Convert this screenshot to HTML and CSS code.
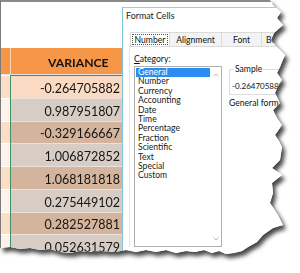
FILE: index.html
```html
<!DOCTYPE html>
<html>
<head>
<meta charset="utf-8">
<link rel="stylesheet" href="styles.css">
</head>
<body>
<div class="frame">
  <div class="torn">
    <div class="sheet">
      <div class="topgap"></div>
      <div class="hdr">
        <div class="hdr-a"></div>
        <div class="hdr-b">VARIANCE</div>
      </div>
      <div class="hdr-sep"></div>
      <div class="data">
        <div class="col-a">
          <div class="ca odd"></div>
          <div class="ca even"></div>
          <div class="ca odd"></div>
          <div class="ca even"></div>
          <div class="ca odd"></div>
          <div class="ca even"></div>
          <div class="ca odd"></div>
          <div class="ca even"></div>
        </div>
        <div class="col-b">
          <div class="cb active">-0.264705882</div>
          <div class="cb even">0.987951807</div>
          <div class="cb odd">-0.329166667</div>
          <div class="cb even">1.006872852</div>
          <div class="cb odd">1.068181818</div>
          <div class="cb even">0.275449102</div>
          <div class="cb odd">0.282527881</div>
          <div class="cb even">0.052631579</div>
        </div>
      </div>
    </div>

    <div class="dialog">
      <div class="title">Format Cells</div>
      <div class="tabs">
        <div class="tab sel"><span class="focus">Number</span></div>
        <div class="tab t-align">Alignment</div>
        <div class="tab t-font">Font</div>
        <div class="tab t-border">Border</div>
      </div>
      <div class="panel">
        <div class="left">
          <div class="cat-label"><span class="ul">C</span>ategory:</div>
          <div class="listbox">
            <div class="items">
              <div class="item selected">General</div>
              <div class="item">Number</div>
              <div class="item">Currency</div>
              <div class="item">Accounting</div>
              <div class="item">Date</div>
              <div class="item">Time</div>
              <div class="item">Percentage</div>
              <div class="item">Fraction</div>
              <div class="item">Scientific</div>
              <div class="item">Text</div>
              <div class="item">Special</div>
              <div class="item">Custom</div>
            </div>
            <div class="scroll">
              <svg class="arr" width="8" height="6" viewBox="0 0 8 6"><path d="M1.5 4.5 L4 2 L6.5 4.5" fill="none" stroke="#b8b8b8" stroke-width="1"/></svg>
              <svg class="arr" width="8" height="6" viewBox="0 0 8 6"><path d="M1.5 1.5 L4 4 L6.5 1.5" fill="none" stroke="#b8b8b8" stroke-width="1"/></svg>
            </div>
          </div>
        </div>
        <div class="right">
          <fieldset class="group">
            <legend class="group-label">Sample</legend>
            <div class="sample-val">-0.264705882</div>
          </fieldset>
          <div class="desc">General format cells have no specific number format.</div>
        </div>
      </div>
    </div>
  </div>
</div>
</body>
</html>
```

FILE: styles.css
```css
html, body {
  margin: 0;
  padding: 0;
  background: #ffffff;
}

.frame {
  width: 300px;
  height: 273px;
  overflow: hidden;
  filter: drop-shadow(3px 4px 2px rgba(25, 25, 25, 0.8));
}

.torn {
  position: relative;
  width: 300px;
  height: 273px;
  box-sizing: border-box;
  background: #ffffff;
  border-top: 2px solid #8a8a8a;
  border-left: 1px solid #7a7a7a;
  overflow: hidden;
  clip-path: polygon(0 0, 270px 0, 273px 5px, 281px 12px, 277px 18px, 283px 25px, 274px 33px, 271px 40px, 277px 47px, 285px 55px, 282px 62px, 280px 67px, 277px 73px, 282px 80px, 278px 86px, 275px 93px, 280px 103px, 273px 110px, 277px 118px, 282px 125px, 275px 135px, 279px 141px, 282px 147px, 280px 160px, 272px 168px, 282px 175px, 272px 183px, 273px 193px, 270px 203px, 278px 215px, 283px 225px, 273px 228px, 263px 235px, 257px 242px, 248px 247px, 242px 251px, 234px 253px, 226px 254px, 219px 251px, 212px 253px, 204px 250px, 195px 252px, 186px 251px, 176px 253px, 166px 250px, 156px 252px, 146px 250px, 136px 252px, 126px 250px, 115px 252px, 101px 251px, 90px 252px, 80px 251px, 70px 253px, 60px 252px, 50px 249px, 40px 250px, 30px 248px, 20px 249px, 10px 247px, 0 248px);
}

/* ---------- spreadsheet ---------- */
.sheet {
  width: 121px;
  display: flex;
  flex-direction: column;
  font-family: Lato, "Liberation Sans", sans-serif;
}

.topgap {
  height: 46px;
}

.hdr {
  display: flex;
  height: 26px;
  background: #f79646;
}

.hdr-a {
  width: 9px;
  border-right: 1px solid #fbd3b3;
}

.hdr-b {
  flex: 1;
  display: flex;
  align-items: center;
  padding-left: 37px;
  padding-top: 3px;
  box-sizing: border-box;
  font-weight: bold;
  font-size: 12.2px;
  color: #141414;
}

.hdr-sep {
  height: 1px;
  background: #e3e3e3;
}

.data {
  display: flex;
}

.col-a {
  width: 9px;
  padding-top: 1px;
}

.ca {
  height: 22.75px;
  box-sizing: border-box;
  border-bottom: 1px solid #ffffff;
}

.ca.odd {
  background: #fcddc6;
}

.ca.even {
  background: #fdf2ec;
}

.col-b {
  flex: 1;
  border-left: 1px solid #3f9064;
  border-top: 1px solid #3f9064;
}

.cb {
  height: 22.75px;
  box-sizing: border-box;
  border-bottom: 1px solid #e9e1dc;
  display: flex;
  align-items: flex-end;
  justify-content: flex-end;
  padding-right: 2px;
  padding-bottom: 2px;
  font-size: 12.5px;
  color: #151515;
  line-height: 15px;
}

.cb.active {
  background: #fbdac4;
}

.cb.even {
  background: #d8cdc5;
}

.cb.odd {
  background: #d4b49c;
}

/* ---------- dialog ---------- */
.dialog {
  position: absolute;
  left: 121px;
  top: 5px;
  width: 190px;
  height: 280px;
  box-sizing: border-box;
  background: #ffffff;
  border-left: 1px solid #7cc4d6;
  border-top: 1px solid #9ccfdc;
  font-family: Lato, "Liberation Sans", sans-serif;
  font-size: 8.6px;
  color: #111;
}

.title {
  height: 17px;
  line-height: 16px;
  padding-left: 3px;
  font-size: 8.9px;
  color: #1a1a1a;
}

.tabs {
  display: flex;
  margin-left: 7px;
  margin-top: 7px;
  height: 14px;
}

.tab {
  box-sizing: border-box;
  height: 14px;
  border: 1px solid #dadada;
  border-bottom: none;
  border-left: none;
  background: #f3f3f3;
  display: flex;
  align-items: center;
  justify-content: center;
  line-height: 10px;
}

.tab.sel {
  width: 40px;
  background: #ffffff;
  border-left: 1px solid #dadada;
  padding: 1px;
}

.focus {
  flex: 1;
  align-self: stretch;
  display: flex;
  align-items: center;
  justify-content: center;
  border: 1px dotted #555;
}

.t-align {
  width: 52px;
}

.t-font {
  width: 40px;
}

.t-border {
  width: 40px;
  justify-content: flex-start;
  padding-left: 4px;
}

.panel {
  display: flex;
  align-items: flex-start;
  margin-left: 6px;
  border-top: 1px solid #dadada;
  border-left: 1px solid #e6e6e6;
  padding-left: 4px;
  padding-top: 7px;
}

.left {
  display: flex;
  flex-direction: column;
}

.cat-label {
  line-height: 10px;
  height: 10px;
  margin-bottom: 2px;
}

.ul {
  text-decoration: underline;
}

.listbox {
  width: 88px;
  height: 181px;
  box-sizing: border-box;
  border: 1px solid #b0b0b0;
  display: flex;
}

.items {
  flex: 1;
  padding: 1px 0 0 1px;
}

.item {
  height: 9.4px;
  line-height: 9.4px;
  padding-left: 2px;
  color: #1a1a1a;
}

.item.selected {
  background: #2b8cf2;
  color: #ffffff;
}

.scroll {
  width: 11px;
  display: flex;
  flex-direction: column;
  justify-content: space-between;
  align-items: center;
  padding: 5px 0 4px;
}

.arr {
  display: block;
}

.right {
  margin-left: 7px;
  margin-top: 10px;
  width: 56px;
  overflow: hidden;
  white-space: nowrap;
}

.group {
  margin: 0;
  width: 90px;
  padding: 0 0 3px 2px;
  border: 1px solid #dcdcdc;
  border-right: none;
}

.group-label {
  margin-left: 2px;
  padding: 0 1px;
  line-height: 10px;
}

.sample-val {
  margin-top: 7px;
  font-size: 8px;
  line-height: 10px;
}

.desc {
  margin-top: 3px;
  line-height: 10px;
}
```
